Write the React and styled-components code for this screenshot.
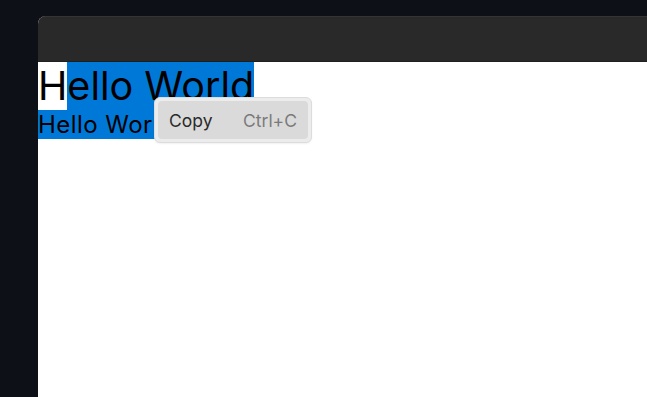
import React from "react";
import styled, { createGlobalStyle } from "styled-components";

const Global = createGlobalStyle`
  html, body { margin: 0; padding: 0; background: #0d1117; }
  body { font-family: Inter, "Noto Sans", sans-serif; }
`;

const Page = styled.div`
  height: 397px;
  box-sizing: border-box;
  padding: 16px 0 0 38px;
  overflow: hidden;
  display: flex;
`;

const Window = styled.div`
  flex: 1;
  display: flex;
  flex-direction: column;
  border-radius: 8px 0 0 0;
  overflow: hidden;
  background: #ffffff;
`;

const TitleBar = styled.div`
  height: 46px;
  box-sizing: border-box;
  background: #292929;
  border-top: 1px solid #343434;
  border-bottom: 1px solid #1f1f1f;
  flex-shrink: 0;
`;

const Content = styled.div`
  position: relative;
  flex: 1;
  color: #000;
`;

const Line = styled.div`
  font-size: ${(p) => p.$size}px;
  line-height: ${(p) => p.$lh}px;
  height: ${(p) => p.$lh}px;
  letter-spacing: ${(p) => p.$ls || 0}px;
  white-space: pre;
  display: flex;
`;

const Sel = styled.span`
  background: ${(p) => (p.$on ? "#0078d7" : "transparent")};
  display: inline-block;
`;

const Menu = styled.div`
  position: absolute;
  left: 116px;
  top: 35px;
  width: 158px;
  box-sizing: border-box;
  padding: 3px;
  background: #ececec;
  border: 1px solid #dcdcdc;
  border-radius: 6px;
  box-shadow: 0 1px 2px rgba(0, 0, 0, 0.06);
`;

const Item = styled.div`
  display: flex;
  align-items: center;
  justify-content: space-between;
  height: 38px;
  padding: 0 11px 0 11px;
  border-radius: 4px;
  background: #dadada;
  font-size: 17.5px;
`;

const Label = styled.span`
  color: #2a2a2a;
`;

const Shortcut = styled.span`
  color: #7a7a7a;
`;

export default function App() {
  return (
    <>
      <Global />
      <Page>
        <Window>
          <TitleBar />
          <Content>
            <Line $size={39.5} $lh={48}>
              <Sel>H</Sel>
              <Sel $on>ello World</Sel>
            </Line>
            <Line $size={24} $lh={29} $ls={0.45}>
              <Sel $on>Hello World</Sel>
            </Line>
            <Menu>
              <Item>
                <Label>Copy</Label>
                <Shortcut>Ctrl+C</Shortcut>
              </Item>
            </Menu>
          </Content>
        </Window>
      </Page>
    </>
  );
}
